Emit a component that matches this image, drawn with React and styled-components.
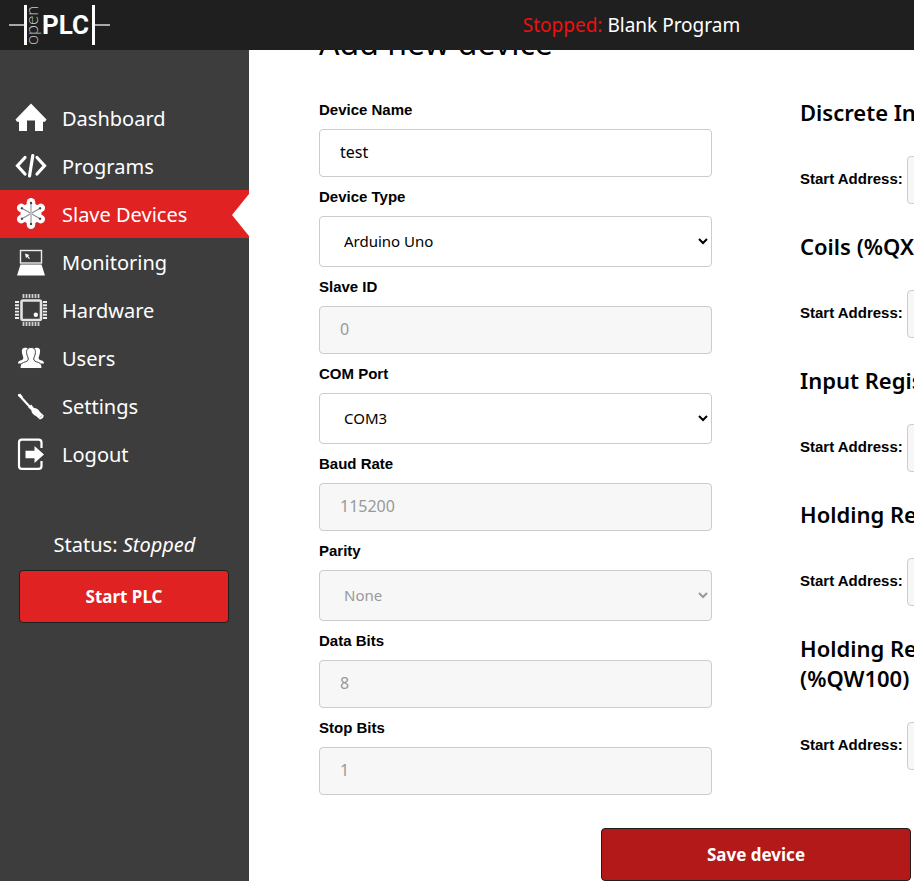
import { useState } from 'react';
import styled, { createGlobalStyle } from 'styled-components';

const navItems = [
  { label: 'Dashboard', icon: HomeIcon },
  { label: 'Programs', icon: CodeIcon },
  { label: 'Slave Devices', icon: NetworkIcon, active: true },
  { label: 'Monitoring', icon: LaptopIcon },
  { label: 'Hardware', icon: ChipIcon },
  { label: 'Users', icon: UsersIcon },
  { label: 'Settings', icon: ScrewdriverIcon },
  { label: 'Logout', icon: LogoutIcon },
];

const fields = [
  { id: 'device_name', label: 'Device Name', value: 'test' },
  { id: 'device_type', label: 'Device Type', options: ['Arduino Uno', 'Arduino Mega', 'ESP32', 'ESP8266'] },
  { id: 'slave_id', label: 'Slave ID', value: '0', disabled: true },
  { id: 'com_port', label: 'COM Port', options: ['COM3', 'COM4'] },
  { id: 'baud_rate', label: 'Baud Rate', value: '115200', disabled: true },
  { id: 'parity', label: 'Parity', options: ['None', 'Even', 'Odd'], disabled: true },
  { id: 'data_bits', label: 'Data Bits', value: '8', disabled: true },
  { id: 'stop_bits', label: 'Stop Bits', value: '1', disabled: true },
];

const registers = [
  { id: 'di', title: ['Discrete Inputs (%IX100.0)'] },
  { id: 'do', title: ['Coils (%QX100.0)'] },
  { id: 'ai', title: ['Input Registers (%IW100)'] },
  { id: 'aor', title: ['Holding Registers - Read'] },
  { id: 'aow', title: ['Holding Registers - Write', '(%QW100)'] },
];

export default function App() {
  return (
    <>
      <GlobalStyle />
      <TopBar>
        <Logo />
        <ProgramStatus>
          <StoppedText>Stopped:</StoppedText> Blank Program
        </ProgramStatus>
      </TopBar>
      <Page>
        <Sidebar>
          <nav>
            <NavList>
              {navItems.map(({ label, icon: Icon, active }) => (
                <li key={label}>
                  <NavLink href="#" $active={active}>
                    <Icon />
                    {label}
                  </NavLink>
                </li>
              ))}
            </NavList>
          </nav>
          <PlcStatus>
            Status: <i>Stopped</i>
          </PlcStatus>
          <StartButton type="button">Start PLC</StartButton>
        </Sidebar>
        <Content>
          <PageTitle>Add new device</PageTitle>
          <form>
            <Columns>
              <div>
                {fields.map((field) => (
                  <Field key={field.id} {...field} />
                ))}
              </div>
              <RegisterColumn>
                {registers.map(({ id, title }) => (
                  <section key={id}>
                    <RegisterTitle>
                      {title.map((line) => (
                        <TitleLine key={line}>{line}</TitleLine>
                      ))}
                    </RegisterTitle>
                    <AddressRow>
                      <AddressLabel htmlFor={`${id}_start`}>Start Address:</AddressLabel>
                      <AddressInput id={`${id}_start`} defaultValue="0" disabled />
                      <AddressLabel htmlFor={`${id}_size`}>Size:</AddressLabel>
                      <AddressInput id={`${id}_size`} defaultValue="8" disabled />
                    </AddressRow>
                  </section>
                ))}
              </RegisterColumn>
            </Columns>
            <SaveButton type="button">Save device</SaveButton>
          </form>
        </Content>
      </Page>
    </>
  );
}

function Field({ id, label, value, options, disabled }) {
  const [current, setCurrent] = useState(options ? options[0] : value);
  const onChange = (e) => setCurrent(e.target.value);

  return (
    <>
      <FieldLabel htmlFor={id}>{label}</FieldLabel>
      {options ? (
        <Select id={id} value={current} onChange={onChange} disabled={disabled}>
          {options.map((option) => (
            <option key={option}>{option}</option>
          ))}
        </Select>
      ) : (
        <Input id={id} value={current} onChange={onChange} disabled={disabled} />
      )}
    </>
  );
}

function Logo() {
  return (
    <LogoSvg viewBox="0 0 102 42" role="img" aria-label="OpenPLC">
      <path d="M0 21H16M86 21H101" stroke="#a8a8a8" strokeWidth="2" />
      <path d="M16.500 1V41M84.500 1V41" stroke="#fff" strokeWidth="3" />
      <OpenText transform="translate(29 41) rotate(-90)">open</OpenText>
      <PlcText x="33" y="30">
        PLC
      </PlcText>
    </LogoSvg>
  );
}

function HomeIcon() {
  return (
    <Icon viewBox="0 0 32 32">
      <path d="M16 1.500 31.500 17.500 30 19.800H28V29H20V18.500H12V29H4V19.800H2L.5 17.500Z" fill="#fff" />
    </Icon>
  );
}

function CodeIcon() {
  return (
    <Icon viewBox="0 0 32 32">
      <path
        d="M10 7.500 2.500 15.700 10 24M22 7.500 29.500 15.700 22 24M17.800 5.500 14.500 26"
        fill="none"
        stroke="#fff"
        strokeWidth="3.200"
        strokeLinecap="round"
      />
    </Icon>
  );
}

function NetworkIcon() {
  const spokes = [0, 60, 120, 180, 240, 300];
  return (
    <Icon viewBox="0 0 32 32">
      <circle cx="16" cy="15.500" r="10.500" fill="#fff" />
      {spokes.map((angle) => (
        <path
          key={angle}
          d="M16 15.500V4.200"
          stroke="#fff"
          strokeWidth="8.500"
          strokeLinecap="round"
          transform={`rotate(${angle} 16 15.500)`}
        />
      ))}
      {spokes.map((angle) => (
        <g key={angle} transform={`rotate(${angle} 16 15.500)`}>
          <path d="M16 15.500V5" stroke="#8a8a8a" strokeWidth="1" />
          <circle cx="16" cy="5" r="1.200" fill="#444" />
        </g>
      ))}
      <circle cx="16" cy="15.500" r="1.600" fill="#c4c4c4" />
    </Icon>
  );
}

function LaptopIcon() {
  return (
    <Icon viewBox="0 0 32 32">
      <rect x="5.500" y="4.500" width="21" height="12.500" fill="none" stroke="#eee" strokeWidth="1.400" />
      <path d="M5.500 18.500H26.500L30 29.500H2Z" fill="#fff" />
      <path d="M10 7.500 14.500 9 13 10 15 12.500 14 13 12 10.800 11 12.200Z" fill="#fff" />
    </Icon>
  );
}

function ChipIcon() {
  return (
    <Icon viewBox="0 0 32 32">
      <rect x="6.500" y="6.500" width="19.500" height="19.500" rx="1.500" fill="none" stroke="#e2e2e2" strokeWidth="2.600" />
      <path
        d="M8.500 0V4M11.500 0V4M14.500 0V4M17.500 0V4M20.500 0V4M23.500 0V4M8.500 28V32M11.500 28V32M14.500 28V32M17.500 28V32M20.500 28V32M23.500 28V32"
        stroke="#d0d0d0"
        strokeWidth="1.800"
      />
      <path
        d="M0 8H4M0 11.200H4M0 14.400H4M0 17.600H4M0 20.800H4M0 24H4M28 8H32M28 11.200H32M28 14.400H32M28 17.600H32M28 20.800H32M28 24H32"
        stroke="#eee"
        strokeWidth="1.900"
      />
      <circle cx="20.800" cy="20.800" r="2.200" fill="#fff" />
    </Icon>
  );
}

function UsersIcon() {
  return (
    <Icon viewBox="0 0 32 32">
      <path
        d="M9 6C6.500 6.500 6.500 9 7.500 13 8.300 15 9 17 7 18 4.500 18.500 3 19 3 21.500H29C29 19 27.500 18.500 25 18 23 17 23.700 15 24.500 13 25.500 9 25.500 6.500 23 6 21 5.300 20 6 19 7H13C12 6 11 5.300 9 6Z"
        fill="#fff"
      />
      <path
        d="M16 5.500C12.500 5.500 11 8 11.800 12 12.300 14.500 13.300 15.500 13.300 17 13.300 19 11.500 19.500 8.500 20.500 6 21.500 5 23 5 26.500H27C27 23 26 21.500 23.500 20.500 20.500 19.500 18.700 19 18.700 17 18.700 15.500 19.700 14.500 20.200 12 21 8 19.500 5.500 16 5.500Z"
        fill="#fff"
        stroke="#3e3e3e"
        strokeWidth="1"
      />
    </Icon>
  );
}

function ScrewdriverIcon() {
  return (
    <Icon viewBox="0 0 32 32">
      <path d="M4 5 15 17" stroke="#fff" strokeWidth="2.200" strokeLinecap="round" />
      <path d="M2.800 5.700 5.200 3.600 8 7 6.500 8.500Z" fill="#fff" />
      <path
        d="M13.200 17.200 16.200 14.500 19 18C21.500 18 23.500 19.500 25 22L28.800 25.500C28.300 28 27 29.200 24.800 29.500L21 26C18 24.800 16.500 22.800 16.300 20.300Z"
        fill="#fff"
      />
      <path d="M24.300 28 27.300 25.200" stroke="#999" strokeWidth="0.800" />
    </Icon>
  );
}

function LogoutIcon() {
  return (
    <Icon viewBox="0 0 32 32">
      <path
        d="M26.500 10V4.500Q26.500 1.700 23.700 1.700H6.800Q4 1.700 4 4.500V28Q4 30.800 6.800 30.800H23.700Q26.500 30.800 26.500 28V23"
        fill="none"
        stroke="#fff"
        strokeWidth="2.200"
      />
      <path d="M10.500 12.700H19.500V8L29 16.500 19.500 25V20.300H10.500Z" fill="#fff" />
    </Icon>
  );
}

const GlobalStyle = createGlobalStyle`
  *, *::before, *::after {
    box-sizing: border-box;
  }

  html {
    scrollbar-width: none;
  }

  body {
    margin: 0;
    overflow-x: hidden;
    background: #fff;
    color: #000;
    font-family: "Noto Sans", "Open Sans", sans-serif;
  }
`;

const TopBar = styled.header`
  position: fixed;
  top: 0;
  left: 0;
  z-index: 1;
  display: grid;
  grid-template-columns: 1fr auto 1fr;
  align-items: center;
  width: 100%;
  min-width: 1263px;
  height: 50px;
  padding: 0 9px;
  background: #1f1f1f;
`;

const LogoSvg = styled.svg`
  width: 102px;
  height: 42px;
`;

const OpenText = styled.text`
  font-family: Lato, sans-serif;
  font-size: 18px;
  font-weight: 300;
  fill: #ccc;
`;

const PlcText = styled.text`
  font-family: Roboto, sans-serif;
  font-size: 26px;
  font-weight: 700;
  fill: #fff;
`;

const ProgramStatus = styled.div`
  color: #fff;
  font-size: 19px;
`;

const StoppedText = styled.span`
  color: #f00f0f;
`;

const Page = styled.div`
  display: flex;
  min-width: 1263px;
  min-height: 100vh;
`;

const Sidebar = styled.aside`
  flex: 0 0 249px;
  padding-top: 94px;
  background: #3d3d3d;
  color: #fff;
`;

const NavList = styled.ul`
  list-style: none;
  margin: 0;
  padding: 0;
`;

const NavLink = styled.a`
  position: relative;
  display: flex;
  align-items: center;
  gap: 15px;
  height: 48px;
  padding-left: 15px;
  color: #fff;
  font-size: 20px;
  text-decoration: none;
  background: ${({ $active }) => ($active ? '#e02222' : 'transparent')};

  &::after {
    content: '';
    display: ${({ $active }) => ($active ? 'block' : 'none')};
    position: absolute;
    top: 4px;
    right: 0;
    width: 17px;
    height: 42px;
    background: #fff;
    clip-path: polygon(100% 0, 0 50%, 100% 100%);
  }
`;

const Icon = styled.svg`
  flex: none;
  width: 32px;
  height: 32px;
`;

const PlcStatus = styled.p`
  margin: 54px 0 12px;
  font-size: 20px;
  line-height: 26px;
  text-align: center;
`;

const Button = styled.button`
  display: block;
  height: 53px;
  border: 1px solid #1f1f1f;
  border-radius: 4px;
  color: #fff;
  font-family: inherit;
  font-size: 17px;
  font-weight: 700;
  cursor: pointer;
`;

const StartButton = styled(Button)`
  width: 210px;
  margin: 0 19px;
  background: #e02222;
`;

const SaveButton = styled(Button)`
  width: 310px;
  margin: 33px auto 0;
  background: #b31919;
`;

const Content = styled.main`
  flex: 1;
  padding: 20px 70px 0;
`;

const PageTitle = styled.h2`
  margin: 0 0 24px;
  font-size: 32px;
  font-weight: 400;
  line-height: 46px;
`;

const Columns = styled.div`
  display: grid;
  grid-template-columns: 1fr 1fr;
  gap: 88px;
`;

const RegisterColumn = styled.div`
  padding-top: 7px;
`;

const Label = styled.label`
  font-family: "Liberation Sans", Arial, sans-serif;
  font-size: 15px;
  font-weight: 700;
  line-height: 23px;
  white-space: nowrap;
`;

const FieldLabel = styled(Label)`
  display: block;
  padding: 8px 0;
`;

const AddressLabel = styled(Label)`
  padding-bottom: 4px;
`;

const Input = styled.input`
  display: block;
  width: 100%;
  height: 48px;
  padding: 10px 20px 12px;
  border: 1px solid #ccc;
  border-radius: 4px;
  background: #fff;
  color: #000;
  font-family: inherit;
  font-size: 16px;

  &:disabled {
    background: #f7f7f7;
    color: #999;
  }
`;

const Select = styled.select`
  display: block;
  width: 100%;
  height: 51px;
  padding: 0 0 2px 20px;
  border: 1px solid #ccc;
  border-radius: 4px;
  background: #fff;
  color: #000;
  font-family: inherit;
  font-size: 15px;

  &:disabled {
    background: #f7f7f7;
    color: #999;
    opacity: 1;
  }
`;

const RegisterTitle = styled.h3`
  margin: 0 0 29px;
  font-size: 22px;
  font-weight: 600;
  line-height: 30px;
`;

const TitleLine = styled.span`
  display: block;
`;

const AddressRow = styled.div`
  display: flex;
  align-items: center;
  gap: 4px;
  margin-bottom: 27px;

  section:last-child > & {
    margin-bottom: 0;
  }
`;

const AddressInput = styled(Input)`
  flex: 1;
  min-width: 0;
`;
